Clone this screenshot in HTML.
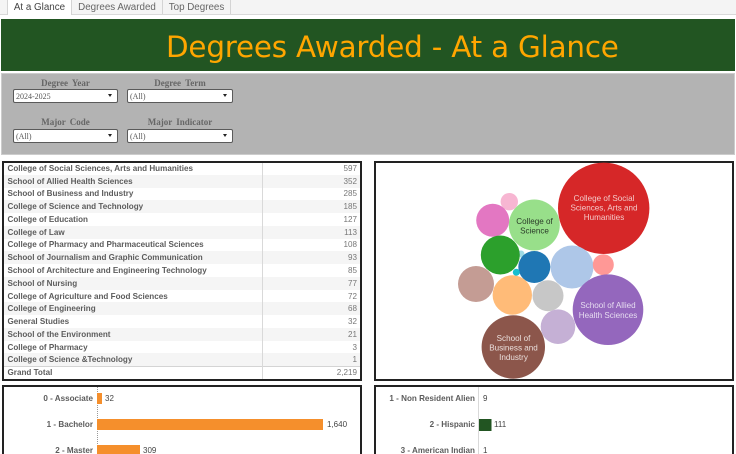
<!DOCTYPE html>
<html><head><meta charset="utf-8"><style>
html,body{margin:0;padding:0;background:#fff}
#p{position:relative;width:736px;height:454px;overflow:hidden;background:#fff;font-family:"Liberation Sans",sans-serif}
#p div{position:absolute;box-sizing:border-box;white-space:nowrap}
.tab{top:0;height:14px;font-size:9.8px;line-height:15px;color:#666;text-align:center;border-right:1px solid #d4d4d4}
.lab{font-family:"Liberation Serif",serif;font-weight:bold;font-size:9px;color:#666;text-align:center;word-spacing:2px;height:12px;line-height:12px;filter:blur(.3px)}
.sel{width:106px;height:14px;background:#fff;border:1px solid #5a5a5a;border-radius:2px;font-family:"Liberation Serif",serif;font-size:8px;line-height:13px;padding-left:2px;color:#555}
.sel i{position:absolute;right:5px;top:4px;width:0;height:0;border-left:2.5px solid transparent;border-right:2.5px solid transparent;border-top:3.5px solid #222}
.panel{border:2px solid #222;background:#fff}
.r{left:4px;width:356px;height:13px;font-size:8.1px;line-height:13px;font-weight:bold;color:#5c5c5c;padding-left:3.5px}
.r span{position:absolute;right:3px;font-weight:normal;color:#777}
.bl{font-size:8.1px;font-weight:bold;color:#5c5c5c;text-align:right;line-height:12px;height:12px}
.bv{font-size:8px;color:#444;line-height:12px;height:12px}
svg text{font-family:"Liberation Sans",sans-serif;font-size:8.1px;text-anchor:middle}
</style></head><body><div id="p">
<div style="left:0;top:0;width:736px;height:15px;background:#f4f4f4;border-bottom:1px solid #d9d9d9"></div>
<div class="tab" style="left:7px;width:65px;height:15px;background:#fff;color:#444;border-left:1px solid #d4d4d4">At a Glance</div>
<div class="tab" style="left:72px;width:91px">Degrees Awarded</div>
<div class="tab" style="left:163px;width:68px">Top Degrees</div>

<div style="left:1px;top:19px;width:734px;height:52px;background:#225522"></div>
<div style="left:166px;top:26px;font-family:'DejaVu Sans',sans-serif;font-size:29.4px;line-height:42px;color:#ffa600;letter-spacing:-.2px">Degrees Awarded - At a Glance</div>

<div style="left:1px;top:73px;width:734px;height:82px;background:#b3b3b3;border:1px solid #ccc"></div>
<div class="lab" style="left:13px;top:76px;width:105px;margin-top:1px">Degree Year</div>
<div class="lab" style="left:127px;top:76px;width:106px;margin-top:1px">Degree Term</div>
<div class="lab" style="left:13px;top:115px;width:105px;margin-top:1px">Major Code</div>
<div class="lab" style="left:127px;top:115px;width:106px;margin-top:1px">Major Indicator</div>
<div class="sel" style="left:13px;top:89px;width:105px">2024-2025<i></i></div>
<div class="sel" style="left:127px;top:89px;width:106px">(All)<i></i></div>
<div class="sel" style="left:13px;top:129px;width:105px">(All)<i></i></div>
<div class="sel" style="left:127px;top:129px;width:106px">(All)<i></i></div>

<div class="panel" style="left:2px;top:161px;width:360px;height:220px"></div>
<div class="panel" style="left:374px;top:161px;width:360px;height:220px"></div>
<div class="panel" style="left:2px;top:385px;width:360px;height:80px"></div>
<div class="panel" style="left:374px;top:385px;width:360px;height:80px"></div>

<div class="r" style="top:162px;left:4px">College of Social Sciences, Arts and Humanities<span>597</span></div>
<div class="r" style="top:175px;background:#f5f5f5">School of Allied Health Sciences<span>352</span></div>
<div class="r" style="top:187px">School of Business and Industry<span>285</span></div>
<div class="r" style="top:200px;background:#f5f5f5">College of Science and Technology<span>185</span></div>
<div class="r" style="top:213px">College of Education<span>127</span></div>
<div class="r" style="top:226px;background:#f5f5f5">College of Law<span>113</span></div>
<div class="r" style="top:238px">College of Pharmacy and Pharmaceutical Sciences<span>108</span></div>
<div class="r" style="top:251px;background:#f5f5f5">School of Journalism and Graphic Communication<span>93</span></div>
<div class="r" style="top:264px">School of Architecture and Engineering Technology<span>85</span></div>
<div class="r" style="top:277px;background:#f5f5f5">School of Nursing<span>77</span></div>
<div class="r" style="top:290px">College of Agriculture and Food Sciences<span>72</span></div>
<div class="r" style="top:302px;background:#f5f5f5">College of Engineering<span>68</span></div>
<div class="r" style="top:315px">General Studies<span>32</span></div>
<div class="r" style="top:328px;background:#f5f5f5">School of the Environment<span>21</span></div>
<div class="r" style="top:341px">College of Pharmacy<span>3</span></div>
<div class="r" style="top:353px;background:#f5f5f5">College of Science &amp;Technology<span>1</span></div>
<div class="r" style="top:366px;border-top:1px solid #d4d4d4;line-height:12px">Grand Total<span>2,219</span></div>
<div style="left:262px;top:163px;width:1px;height:216px;background:#d9d9d9"></div>

<svg style="position:absolute;left:0;top:0" width="736" height="454">
<circle cx="521" cy="254" r="3.5" fill="#9edae5"/>
<circle cx="603.7" cy="208.3" r="45.7" fill="#d62728"/>
<circle cx="534.3" cy="225" r="25.5" fill="#98df8a"/>
<circle cx="509.3" cy="201.7" r="8.7" fill="#f7b6d2"/>
<circle cx="492.7" cy="220.3" r="16.5" fill="#e377c2"/>
<circle cx="500.3" cy="255" r="19.5" fill="#2ca02c"/>
<circle cx="534.3" cy="267" r="16" fill="#1f77b4"/>
<circle cx="572" cy="267" r="21.5" fill="#aec7e8"/>
<circle cx="603.3" cy="264.7" r="10.5" fill="#ff9896"/>
<circle cx="476" cy="284" r="18" fill="#c49c94"/>
<circle cx="512.3" cy="295" r="19.7" fill="#ffbb78"/>
<circle cx="548" cy="295.7" r="15.5" fill="#c7c7c7"/>
<circle cx="558" cy="326.7" r="17.3" fill="#c5b0d5"/>
<circle cx="608" cy="309.7" r="35.3" fill="#9467bd"/>
<circle cx="513.3" cy="347" r="31.7" fill="#8c564b"/>
<circle cx="516.3" cy="272.3" r="3.5" fill="#17becf"/>
<g fill="#f3c9c9"><text x="604" y="201">College of Social</text><text x="604" y="210.500">Sciences, Arts and</text><text x="604" y="220">Humanities</text></g>
<g fill="#2a3a28"><text x="534.500" y="224">College of</text><text x="534.500" y="233.500">Science</text></g>
<g fill="#e6dcf0"><text x="608" y="308">School of Allied</text><text x="608" y="318">Health Sciences</text></g>
<g fill="#eadfdc"><text x="513.500" y="341">School of</text><text x="513.500" y="350.500">Business and</text><text x="513.500" y="360">Industry</text></g>
<line x1="97.500" y1="387" x2="97.500" y2="454" stroke="#999" stroke-width="1" stroke-dasharray="1 1"/>
<line x1="478.500" y1="387" x2="478.500" y2="454" stroke="#d9d9d9" stroke-width="1"/>
<rect x="97" y="393" width="5" height="11" fill="#f58f2c"/>
<rect x="97" y="419" width="226" height="11" fill="#f58f2c"/>
<rect x="97" y="445" width="43" height="11" fill="#f58f2c"/>
<rect x="479" y="419" width="12.500" height="12" fill="#225522"/>
</svg>

<div class="bl" style="left:10px;top:393px;width:83px">0 - Associate</div><div class="bv" style="left:105px;top:393px">32</div>
<div class="bl" style="left:10px;top:419px;width:83px">1 - Bachelor</div><div class="bv" style="left:327px;top:419px">1,640</div>
<div class="bl" style="left:10px;top:445px;width:83px">2 - Master</div><div class="bv" style="left:143px;top:445px">309</div>
<div class="bl" style="left:380px;top:393px;width:95px">1 - Non Resident Alien</div><div class="bv" style="left:483px;top:393px">9</div>
<div class="bl" style="left:380px;top:419px;width:95px">2 - Hispanic</div><div class="bv" style="left:494px;top:419px">111</div>
<div class="bl" style="left:380px;top:445px;width:95px">3 - American Indian</div><div class="bv" style="left:483px;top:445px">1</div>
</div></body></html>
